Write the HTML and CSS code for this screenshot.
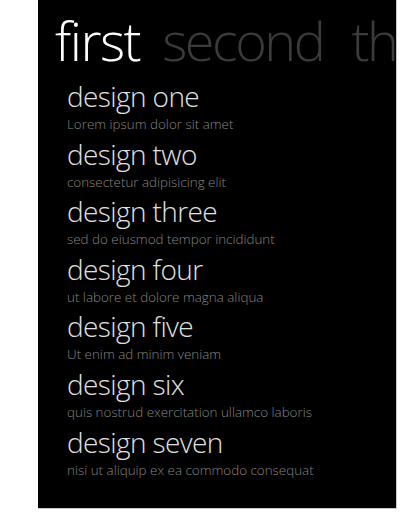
FILE: index.html
```html
<!DOCTYPE html>
<html lang="en">
<head>
    <meta charset="UTF-8">
    <meta name="viewport" content="width=device-width, initial-scale=1.0">
    <title>Pivot</title>
    <link rel="stylesheet" href="styles.css">
</head>
<body>
    <div class="phone">
        <div class="pivot-head">
            <span class="pivot-item active">first</span>
            <span class="pivot-item">second</span>
            <span class="pivot-item">third</span>
        </div>
        <ul class="list">
            <li class="row">
                <div class="row-title">design one</div>
                <div class="row-sub">Lorem ipsum dolor sit amet</div>
            </li>
            <li class="row">
                <div class="row-title">design two</div>
                <div class="row-sub">consectetur adipisicing elit</div>
            </li>
            <li class="row">
                <div class="row-title">design three</div>
                <div class="row-sub">sed do eiusmod tempor incididunt</div>
            </li>
            <li class="row">
                <div class="row-title">design four</div>
                <div class="row-sub">ut labore et dolore magna aliqua</div>
            </li>
            <li class="row">
                <div class="row-title">design five</div>
                <div class="row-sub">Ut enim ad minim veniam</div>
            </li>
            <li class="row">
                <div class="row-title">design six</div>
                <div class="row-sub">quis nostrud exercitation ullamco laboris</div>
            </li>
            <li class="row">
                <div class="row-title">design seven</div>
                <div class="row-sub">nisi ut aliquip ex ea commodo consequat</div>
            </li>
        </ul>
    </div>
</body>
</html>
```

FILE: styles.css
```css
body {
    margin: 0;
    background-color: #fff;
    font-family: "Open Sans", "Noto Sans", sans-serif;
    font-weight: 300;
}

.phone {
    margin-left: 38px;
    width: 358px;
    height: 508px;
    background-color: #000;
    border-right: 1px solid #c8c8c8;
    border-bottom: 1px solid #c8c8c8;
    overflow: hidden;
}

.pivot-head {
    white-space: nowrap;
    padding-left: 17px;
    padding-top: 8px;
    font-size: 54px;
    line-height: 64px;
}

.pivot-item {
    color: #3b3b3b;
    margin-right: 14px;
    letter-spacing: -2.5px;
}

.pivot-item.active {
    color: #fff;
    margin-right: 8px;
    letter-spacing: -1.5px;
}

.list {
    list-style: none;
    margin: 0;
    padding: 6px 0 0 29px;
}

.row {
    height: 57.6px;
}

.row-title {
    color: #e0e0e0;
    font-size: 28px;
    line-height: 37px;
    letter-spacing: -0.6px;
}

.row-sub {
    color: #858585;
    font-size: 13.4px;
    line-height: 18px;
}
```
